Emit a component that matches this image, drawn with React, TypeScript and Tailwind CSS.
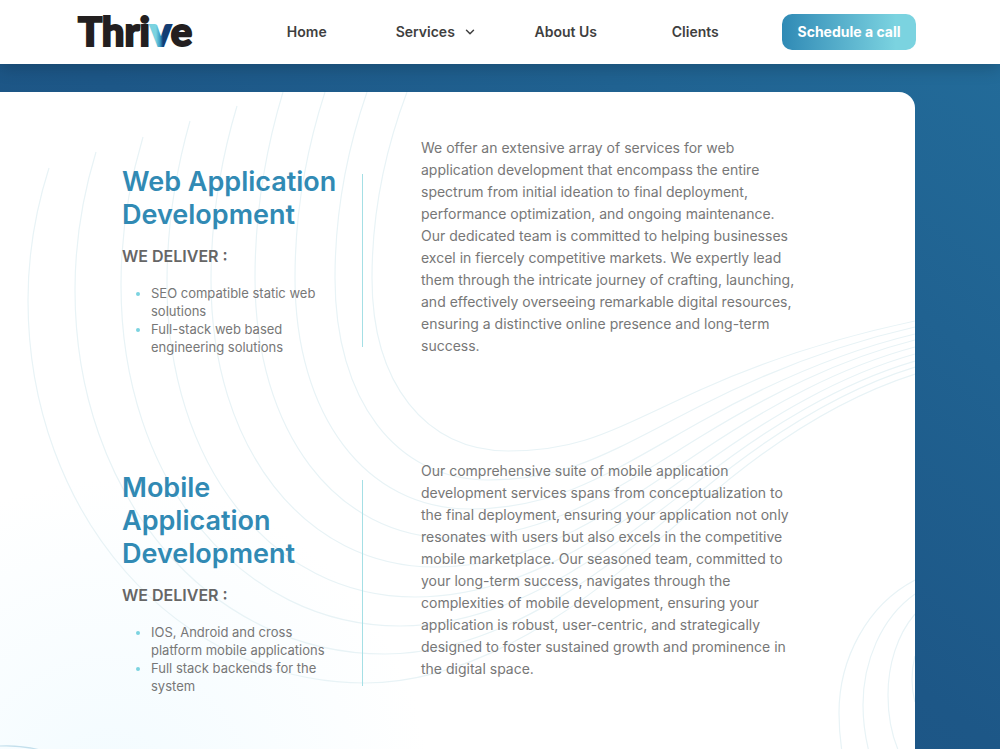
import React from 'react';
import { ChevronDown } from 'lucide-react';

type Point = [number, number];

interface Service {
  title: string;
  items: string[];
  description: string;
}

const services: Service[] = [
  {
    title: 'Web Application Development',
    items: ['SEO compatible static web solutions', 'Full-stack web based engineering solutions'],
    description:
      'We offer an extensive array of services for web application development that encompass the entire spectrum from initial ideation to final deployment, performance optimization, and ongoing maintenance. Our dedicated team is committed to helping businesses excel in fiercely competitive markets. We expertly lead them through the intricate journey of crafting, launching, and effectively overseeing remarkable digital resources, ensuring a distinctive online presence and long-term success.',
  },
  {
    title: 'Mobile Application Development',
    items: ['IOS, Android and cross platform mobile applications', 'Full stack backends for the system'],
    description:
      'Our comprehensive suite of mobile application development services spans from conceptualization to the final deployment, ensuring your application not only resonates with users but also excels in the competitive mobile marketplace. Our seasoned team, committed to your long-term success, navigates through the complexities of mobile development, ensuring your application is robust, user-centric, and strategically designed to foster sustained growth and prominence in the digital space.',
  },
];

// start, leftmost, lowest, crossing and right-hand point of every wave
const waves: Point[][] = [
  [[49, 76], [28, 208], [365, 591], [700, 412], [915, 282]],
  [[96, 60], [75, 198], [385, 562], [700, 400], [915, 275]],
  [[143, 45], [121, 193], [400, 534], [700, 388], [915, 269]],
  [[190, 29], [167, 191], [415, 505], [700, 375], [915, 262]],
  [[237, 14], [211, 188], [435, 475], [700, 360], [915, 255]],
  [[283, 0], [255, 186], [452, 446], [700, 345], [915, 248]],
  [[325, 0], [295, 186], [470, 417], [700, 330], [915, 242]],
  [[367, 0], [335, 186], [488, 388], [700, 314], [915, 235]],
  [[407, 0], [372, 186], [508, 359], [700, 298], [915, 229]],
];

const wavePath = ([s, l, b, m, r]: Point[], index: number): string => {
  const slope = 0.88 - index * 0.053;
  const k = 0.56 + index * 0.006;
  return [
    `M${s[0]} ${s[1]}`,
    `Q${l[0]} ${s[1] + (l[1] - s[1]) * 0.5} ${l[0]} ${l[1]}`,
    `C${l[0]} ${l[1] + (b[1] - l[1]) * k} ${b[0] - (b[0] - l[0]) * k} ${b[1]} ${b[0]} ${b[1]}`,
    `C${b[0] + (m[0] - b[0]) * 0.38} ${b[1]} ${m[0] - 90} ${m[1] + 90 * slope} ${m[0]} ${m[1]}`,
    `C${m[0] + 70} ${m[1] - 70 * slope} ${r[0] - 75} ${r[1] + 16 + (8 - index)} ${r[0]} ${r[1]}`,
  ].join('');
};

const Waves: React.FC = () => (
  <svg
    className="absolute left-0 top-0 -z-10"
    width="915"
    height="657"
    fill="none"
    stroke="#e8f3f6"
    strokeWidth="1.2"
    aria-hidden="true"
  >
    {waves.map((wave, index) => (
      <path key={index} d={wavePath(wave, index)} />
    ))}
    <path d="M915 488C867 513 839 567 839 621Q839 640 842 660" />
    <path d="M915 502C881 526 863 570 863 613Q863 636 869 660" />
    <path d="M915 522C897 543 888 573 888 603Q888 635 899 660" />
    <path d="M915 564Q909 588 915 610" />
    <path d="M0 654Q20 653 40 658" stroke="#c3dfec" />
  </svg>
);

const Logo: React.FC = () => (
  <svg
    width="114"
    height="64"
    className="overflow-visible font-[Lato,sans-serif] text-[40px] font-black"
    fill="#231f20"
    stroke="#231f20"
    strokeWidth="2"
    role="img"
    aria-label="Thrive"
  >
    <defs>
      <linearGradient id="logo-v" gradientUnits="userSpaceOnUse" x1="72" y1="0" x2="92" y2="0">
        <stop offset="0.3" stopColor="#7bd3e0" />
        <stop offset="0.5" stopColor="#3a9cc4" />
        <stop offset="0.65" stopColor="#143d73" />
      </linearGradient>
    </defs>
    <text x="0" y="46">
      Thri<tspan fill="url(#logo-v)" stroke="url(#logo-v)">v</tspan>e
    </text>
  </svg>
);

const Navbar: React.FC = () => {
  return (
    <header className="relative z-10 flex h-16 items-center bg-white pl-[78px] pr-[84px] shadow-[0_4px_16px_rgba(0,0,0,0.2)]">
      <a href="#">
        <Logo />
      </a>
      <nav className="ml-[50px] mr-[22px] grid flex-1 grid-cols-4 text-center text-sm font-semibold text-[#3f3f3f]">
        <a href="#home">Home</a>
        <a href="#services" className="flex items-center justify-center gap-2">
          Services
          <ChevronDown className="size-3.5" strokeWidth={2.5} />
        </a>
        <a href="#about">About Us</a>
        <a href="#clients">Clients</a>
      </nav>
      <button
        type="button"
        className="h-9 w-[134px] rounded-[10px] bg-linear-to-r from-[#2f8ab5] to-[#7bd3e0] to-85% text-sm font-bold text-white"
      >
        Schedule a call
      </button>
    </header>
  );
};

const ServiceRow: React.FC<{ service: Service }> = ({ service }) => {
  return (
    <section className="grid grid-cols-[241px_1fr] items-center gap-x-[58px]">
      <div className="flex justify-between pt-[27px]">
        <div className="flex-1 pr-5">
          <h2 className="text-[27px] font-semibold leading-[33px] text-[#318ab4]">{service.title}</h2>
          <h3 className="mt-3 font-semibold leading-[26px] text-[#666]">WE DELIVER :</h3>
          <ul className="mt-[15px] list-disc pl-[29px] text-[13px] leading-[18px] marker:text-[#7bd3e0]">
            {service.items.map((item) => (
              <li key={item}>{item}</li>
            ))}
          </ul>
        </div>
        <div className="my-[9px] w-px bg-[#a4dfe5]" />
      </div>
      <p className="text-sm leading-[22px]">{service.description}</p>
    </section>
  );
};

const App: React.FC = () => {
  return (
    <div className="flex min-h-screen flex-col bg-linear-to-tr from-[#1b4f80] via-[#1d5787] to-[#236d9b] font-[Inter,sans-serif]">
      <Navbar />
      <main className="relative isolate mr-[85px] mt-7 flex flex-1 flex-col gap-[87px] overflow-hidden rounded-tr-2xl bg-white bg-radial-[circle_at_12%_108%] from-[#f2fbff] to-white to-30% pb-[54px] pl-[122px] pr-[116px] pt-[45px] text-[#777]">
        <Waves />
        {services.map((service) => (
          <ServiceRow key={service.title} service={service} />
        ))}
      </main>
    </div>
  );
};

export default App;
